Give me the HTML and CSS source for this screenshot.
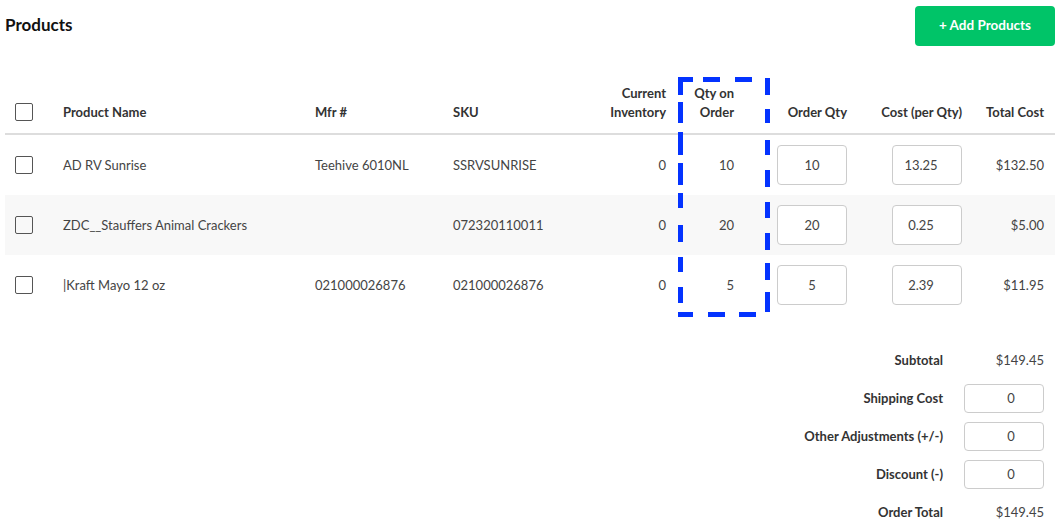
FILE: index.html
```html
<!DOCTYPE html>
<html lang="en">
<head>
    <meta charset="UTF-8">
    <title>Products</title>
    <link rel="stylesheet" href="styles.css">
</head>
<body>
    <div class="page">
        <div class="top-bar">
            <h2>Products</h2>
            <button class="add-button">+ Add Products</button>
        </div>

        <div class="table-wrap">
            <table class="products">
                <colgroup>
                    <col style="width: 48px">
                    <col style="width: 252px">
                    <col style="width: 138px">
                    <col style="width: 127px">
                    <col style="width: 106px">
                    <col style="width: 68px">
                    <col style="width: 113px">
                    <col style="width: 115px">
                    <col style="width: 83px">
                </colgroup>
                <thead>
                    <tr>
                        <th><span class="check"></span></th>
                        <th>Product Name</th>
                        <th>Mfr #</th>
                        <th>SKU</th>
                        <th class="num">Current<br>Inventory</th>
                        <th class="num">Qty on<br>Order</th>
                        <th class="num">Order Qty</th>
                        <th class="num">Cost (per Qty)</th>
                        <th class="num last">Total Cost</th>
                    </tr>
                </thead>
                <tbody>
                    <tr>
                        <td><span class="check"></span></td>
                        <td>AD RV Sunrise</td>
                        <td>Teehive 6010NL</td>
                        <td>SSRVSUNRISE</td>
                        <td class="num">0</td>
                        <td class="num">10</td>
                        <td class="num"><input class="qty-input" type="text" value="10"></td>
                        <td class="num"><input class="cost-input" type="text" value="13.25"></td>
                        <td class="num last">$132.50</td>
                    </tr>
                    <tr>
                        <td><span class="check"></span></td>
                        <td>ZDC__Stauffers Animal Crackers</td>
                        <td></td>
                        <td>072320110011</td>
                        <td class="num">0</td>
                        <td class="num">20</td>
                        <td class="num"><input class="qty-input" type="text" value="20"></td>
                        <td class="num"><input class="cost-input" type="text" value="0.25"></td>
                        <td class="num last">$5.00</td>
                    </tr>
                    <tr>
                        <td><span class="check"></span></td>
                        <td>|Kraft Mayo 12 oz</td>
                        <td>021000026876</td>
                        <td>021000026876</td>
                        <td class="num">0</td>
                        <td class="num">5</td>
                        <td class="num"><input class="qty-input" type="text" value="5"></td>
                        <td class="num"><input class="cost-input" type="text" value="2.39"></td>
                        <td class="num last">$11.95</td>
                    </tr>
                </tbody>
            </table>

            <!-- hand-drawn highlight around the Qty on Order column -->
            <svg class="highlight" width="92" height="241" viewBox="0 0 92 241">
                <g fill="none" stroke="#0433ff" stroke-width="5">
                    <path d="M0 2.5 H15 M25 2.5 H42 M57 2.5 H74"></path>
                    <path d="M2.5 0 V18 M2.5 25 V46 M2.5 55 V78 M2.5 86 V108 M2.5 116 V131 M2.5 148 V165 M2.5 180 V195 M2.5 210 V226 M2.5 235 V240"></path>
                    <path d="M89.5 1 V18 M89.5 32 V46 M89.5 63 V78 M89.5 93 V110 M89.5 125 V141 M89.5 156 V173 M89.5 186 V203 M89.5 215 V235"></path>
                    <path d="M0 237.5 H15 M30 237.5 H47 M61 237.5 H78"></path>
                </g>
            </svg>
        </div>

        <div class="summary">
            <div class="label">Subtotal</div>
            <div class="value">$149.45</div>
            <div class="label">Shipping Cost</div>
            <input class="sum-input" type="text" value="0">
            <div class="label">Other Adjustments (+/-)</div>
            <input class="sum-input" type="text" value="0">
            <div class="label">Discount (-)</div>
            <input class="sum-input" type="text" value="0">
            <div class="label">Order Total</div>
            <div class="value">$149.45</div>
        </div>
    </div>
</body>
</html>
```

FILE: styles.css
```css
body {
    margin: 0;
    font-family: Lato, 'Open Sans', sans-serif;
    color: #444;
    background: #fff;
}
.page {
    width: 1050px;
    margin-left: 5px;
}
.top-bar {
    display: flex;
    justify-content: space-between;
    align-items: center;
    padding-top: 6px;
    height: 40px;
}
.top-bar h2 {
    margin: 0 0 3px;
    font-size: 17px;
    font-weight: 700;
    color: #111;
}
.add-button {
    width: 140px;
    height: 40px;
    padding: 0 0 2px;
    border: none;
    border-radius: 4px;
    background: #00c468;
    color: #fff;
    font-family: inherit;
    font-size: 13.5px;
    font-weight: 700;
}
.table-wrap {
    position: relative;
    margin-top: 31px;
}
.products {
    width: 1050px;
    table-layout: fixed;
    border-collapse: collapse;
    font-size: 13px;
}
.products th {
    height: 45px;
    padding: 0 10px 11px;
    vertical-align: bottom;
    text-align: left;
    font-weight: 700;
    line-height: 19px;
    color: #333;
    border-bottom: 2px solid #ddd;
}
.products td {
    height: 60px;
    padding: 0 10px;
    color: #444;
}
.products tbody tr:nth-child(2) td {
    background: #f8f8f8;
}
.products .num {
    text-align: right;
}
.products .last {
    padding-right: 11px;
}
.check {
    display: block;
    width: 16px;
    height: 16px;
    border: 1px solid #555;
    border-radius: 2px;
}
.products th .check {
    margin-bottom: 1px;
}
input {
    box-sizing: border-box;
    border: 1px solid #ccc;
    border-radius: 4px;
    background: #fff;
    font-family: inherit;
    font-size: 13px;
    color: #444;
    text-align: center;
    vertical-align: middle;
}
.qty-input,
.cost-input {
    width: 70px;
    height: 40px;
}
.cost-input {
    padding-right: 14px;
}
.highlight {
    position: absolute;
    left: 673px;
    top: 0;
}
.summary {
    display: grid;
    grid-template-columns: auto 80px;
    grid-auto-rows: 38px;
    column-gap: 21px;
    justify-content: end;
    align-items: center;
    margin-top: 26px;
    padding-right: 11px;
    font-size: 13px;
}
.summary .label {
    text-align: right;
    font-weight: 700;
    color: #333;
}
.summary .value {
    text-align: right;
}
.sum-input {
    width: 80px;
    height: 29px;
    padding-left: 16px;
}
```
